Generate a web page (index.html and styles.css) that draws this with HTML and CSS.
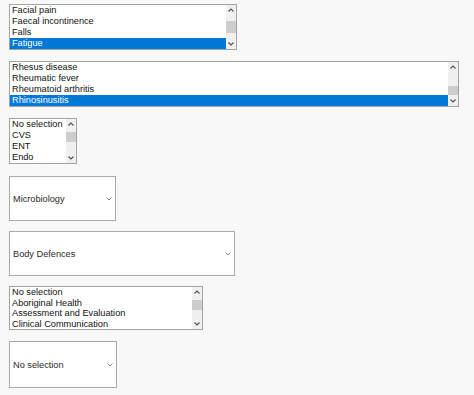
FILE: index.html
```html
<!DOCTYPE html>
<html>
<head>
<meta charset="utf-8">
<link rel="stylesheet" href="styles.css">
</head>
<body>
<div class="page">
  <div class="listbox lb1">
    <div class="options">
      <div class="option">Facial pain</div>
      <div class="option">Faecal incontinence</div>
      <div class="option">Falls</div>
      <div class="option selected">Fatigue</div>
    </div>
    <div class="scrollbar">
      <svg class="arrow" viewBox="0 0 6 4"><path d="M0.5 3.5 L3 1 L5.5 3.5" fill="none" stroke="#505050" stroke-width="1.1"/></svg>
      <div class="track"><div class="thumb thumb1"></div></div>
      <svg class="arrow" viewBox="0 0 6 4"><path d="M0.5 0.5 L3 3 L5.5 0.5" fill="none" stroke="#505050" stroke-width="1.1"/></svg>
    </div>
  </div>

  <div class="listbox lb2">
    <div class="options">
      <div class="option">Rhesus disease</div>
      <div class="option">Rheumatic fever</div>
      <div class="option">Rheumatoid arthritis</div>
      <div class="option selected">Rhinosinusitis</div>
    </div>
    <div class="scrollbar">
      <svg class="arrow" viewBox="0 0 6 4"><path d="M0.5 3.5 L3 1 L5.5 3.5" fill="none" stroke="#505050" stroke-width="1.1"/></svg>
      <div class="track"><div class="thumb thumb2"></div></div>
      <svg class="arrow" viewBox="0 0 6 4"><path d="M0.5 0.5 L3 3 L5.5 0.5" fill="none" stroke="#505050" stroke-width="1.1"/></svg>
    </div>
  </div>

  <div class="listbox lb3">
    <div class="options">
      <div class="option">No selection</div>
      <div class="option">CVS</div>
      <div class="option">ENT</div>
      <div class="option">Endo</div>
    </div>
    <div class="scrollbar">
      <svg class="arrow" viewBox="0 0 6 4"><path d="M0.5 3.5 L3 1 L5.5 3.5" fill="none" stroke="#505050" stroke-width="1.1"/></svg>
      <div class="track"><div class="thumb thumb3"></div></div>
      <svg class="arrow" viewBox="0 0 6 4"><path d="M0.5 0.5 L3 3 L5.5 0.5" fill="none" stroke="#505050" stroke-width="1.1"/></svg>
    </div>
  </div>

  <div class="select sel4">
    <span class="value">Microbiology</span>
    <svg class="chev" viewBox="0 0 6 4"><path d="M0.5 0.5 L3 3 L5.5 0.5" fill="none" stroke="#8a8a8a" stroke-width="1"/></svg>
  </div>

  <div class="select sel5">
    <span class="value">Body Defences</span>
    <svg class="chev" viewBox="0 0 6 4"><path d="M0.5 0.5 L3 3 L5.5 0.5" fill="none" stroke="#8a8a8a" stroke-width="1"/></svg>
  </div>

  <div class="listbox lb6">
    <div class="options">
      <div class="option">No selection</div>
      <div class="option">Aboriginal Health</div>
      <div class="option">Assessment and Evaluation</div>
      <div class="option">Clinical Communication</div>
    </div>
    <div class="scrollbar">
      <svg class="arrow" viewBox="0 0 6 4"><path d="M0.5 3.5 L3 1 L5.5 3.5" fill="none" stroke="#505050" stroke-width="1.1"/></svg>
      <div class="track"><div class="thumb thumb6"></div></div>
      <svg class="arrow" viewBox="0 0 6 4"><path d="M0.5 0.5 L3 3 L5.5 0.5" fill="none" stroke="#505050" stroke-width="1.1"/></svg>
    </div>
  </div>

  <div class="select sel7">
    <span class="value">No selection</span>
    <svg class="chev" viewBox="0 0 6 4"><path d="M0.5 0.5 L3 3 L5.5 0.5" fill="none" stroke="#8a8a8a" stroke-width="1"/></svg>
  </div>
</div>
</body>
</html>
```

FILE: styles.css
```css
html, body {
  margin: 0;
  padding: 0;
  background: #f8f8f8;
}

.page {
  display: flex;
  flex-direction: column;
  align-items: flex-start;
  gap: 11px;
  padding: 4px 0 0 9px;
  font-family: "Liberation Sans", Arial, sans-serif;
  font-size: 9.2px;
  color: #111;
}

.listbox {
  display: flex;
  box-sizing: border-box;
  height: 46px;
  border: 1px solid #a3a3a3;
  background: #fff;
}

.lb1 { width: 228px; }
.lb2 { width: 450px; }
.lb3 { width: 68px; }
.lb6 { width: 194px; height: 44px; margin-top: -1px; }

.options {
  flex: 1;
  display: flex;
  flex-direction: column;
  overflow: hidden;
}

.option {
  height: 11px;
  line-height: 11px;
  padding-left: 2px;
  white-space: nowrap;
}

.lb6 .option {
  height: 10.5px;
  line-height: 10.5px;
}

.option.selected {
  background: #0078d7;
  color: #fff;
}

.scrollbar {
  width: 10px;
  display: flex;
  flex-direction: column;
  align-items: center;
  background: #f0f0f0;
}

.arrow {
  width: 6px;
  height: 4px;
  margin: 3px 0;
  flex: none;
}

.track {
  flex: 1;
  width: 100%;
  display: flex;
  flex-direction: column;
}

.thumb {
  width: 100%;
  background: #cdcdcd;
}

.thumb1 { margin-top: 6px; height: 12px; }
.thumb2 { margin-top: 14px; height: 9px; }
.thumb3 { margin-top: 3px; height: 10px; }
.thumb6 { margin-top: 3px; height: 10px; }

.select {
  display: flex;
  align-items: center;
  justify-content: space-between;
  box-sizing: border-box;
  height: 45px;
  padding: 0 3px 0 3px;
  border: 1px solid #a9a9a9;
  background: #fff;
  color: #2a2a2a;
}

.sel4 { width: 107px; margin-top: 1px; }
.sel5 { width: 226px; margin-top: -1px; }
.sel7 { width: 108px; height: 47px; }

.chev {
  width: 6px;
  height: 4px;
}
```
